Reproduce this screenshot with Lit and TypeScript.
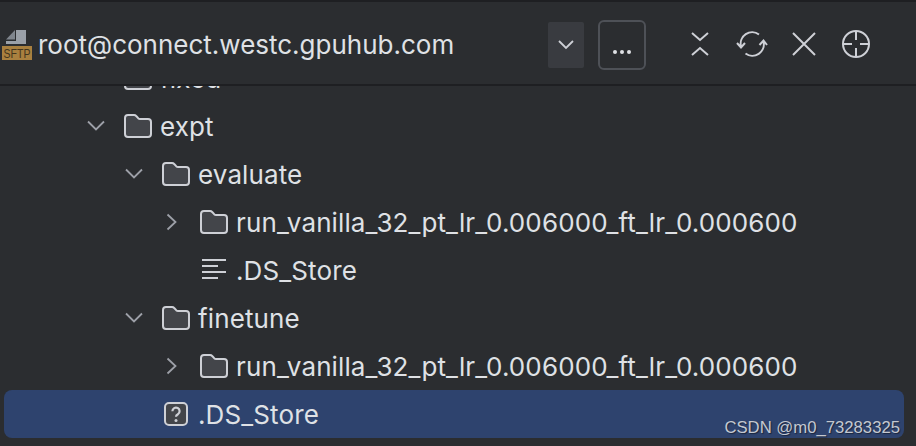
import { LitElement, css, html, svg } from 'lit';
import { customElement } from 'lit/decorators.js';

type Row = {
    depth: number;
    name: string;
    arrow?: 'down' | 'right';
    icon: 'folder' | 'lines' | 'unknown';
    selected?: boolean;
};

const rows: Row[] = [
    { depth: 0, name: 'fixed', icon: 'folder' },
    { depth: 0, name: 'expt', arrow: 'down', icon: 'folder' },
    { depth: 1, name: 'evaluate', arrow: 'down', icon: 'folder' },
    { depth: 2, name: 'run_vanilla_32_pt_lr_0.006000_ft_lr_0.000600', arrow: 'right', icon: 'folder' },
    { depth: 2, name: '.DS_Store', icon: 'lines' },
    { depth: 1, name: 'finetune', arrow: 'down', icon: 'folder' },
    { depth: 2, name: 'run_vanilla_32_pt_lr_0.006000_ft_lr_0.000600', arrow: 'right', icon: 'folder' },
    { depth: 1, name: '.DS_Store', icon: 'unknown', selected: true },
];

const folderIcon = html`<svg width="28" height="24" viewBox="0 0 28 24" fill="none">
    <path d="M1 4a3 3 0 0 1 3-3h6c1 0 1.6.3 2.2 1l2 2.2c.5.5 1 .8 1.8.8h8a3 3 0 0 1 3 3V20a3 3 0 0 1-3 3H4a3 3 0 0 1-3-3z"
        fill="#43454a" stroke="#ced0d6" stroke-width="2" stroke-linejoin="round" />
</svg>`;

const linesIcon = html`<svg width="26" height="22" viewBox="0 0 26 22" fill="none" stroke="#ced0d6" stroke-width="1.8">
    <path d="M1 1h24M1 7h16M1 13h24M1 19h16" />
</svg>`;

const unknownIcon = html`<svg width="24" height="24" viewBox="0 0 24 24" fill="none">
    <rect x="1" y="1" width="22" height="22" rx="4" fill="#43454a" stroke="#ced0d6" stroke-width="2" />
    <path d="M8.4 9.2a3.6 3.6 0 1 1 5.6 3c-1.3.8-2 1.2-2 2.6" stroke="#ced0d6" stroke-width="2.2" />
    <circle cx="12" cy="18.4" r="1.5" fill="#ced0d6" />
</svg>`;

const chevronDown = svg`<path d="M1 4.5l8 8 8-8" />`;
const chevronRight = svg`<path d="M4.5 1.5l8 7.5-8 7.5" />`;

@customElement('app-root')
export class AppRoot extends LitElement
{
    static styles = css`
:host {
    display: block;
    width: 916px;
    height: 446px;
    position: relative;
    overflow: hidden;
    background: #2b2d30;
    font-family: Inter, "Noto Sans", sans-serif;
    color: #dfe1e5;
}

.header {
    position: relative;
    z-index: 1;
    height: 78px;
    box-sizing: content-box;
    border-top: 2px solid #1e1f22;
    border-bottom: 2px solid #1e1f22;
    background: #2b2d30;
    display: flex;
    align-items: center;
    padding: 4px 0 0 2px;
}

.server {
    width: 30px;
    height: 32px;
    flex: none;
}

.title {
    margin: 0 0 2px 6px;
    width: 510px;
    font-size: 26px;
    white-space: nowrap;
}

.combo {
    width: 36px;
    height: 46px;
    background: #393b40;
    border-radius: 2px;
    display: flex;
    align-items: center;
    justify-content: center;
    flex: none;
}

.more {
    margin-left: 14px;
    width: 48px;
    height: 50px;
    box-sizing: border-box;
    border: 2px solid #4e5157;
    border-radius: 6px;
    display: flex;
    align-items: center;
    justify-content: center;
    gap: 3px;
    padding-top: 14px;
    flex: none;
}

.more i {
    width: 4px;
    height: 4px;
    border-radius: 50%;
    background: #dfe1e5;
}

.tools {
    display: flex;
    align-items: center;
    gap: 20px;
    margin: 0 0 2px 38px;
}

.tools svg {
    display: block;
    width: 32px;
    height: 32px;
    fill: none;
    stroke: #ced0d6;
    stroke-width: 2;
}

.tree {
    margin-top: -32px;
}

.row {
    height: 48px;
    margin: 0 12px 0 4px;
    padding-left: calc(var(--depth) * 38px + 83px);
    display: flex;
    align-items: center;
    border-radius: 8px;
    font-size: 26px;
    letter-spacing: .12px;
    white-space: nowrap;
}

.row.selected {
    background: #2e436e;
}

.arrow {
    width: 18px;
    height: 18px;
    flex: none;
    fill: none;
    stroke: #9da0a8;
    stroke-width: 1.8;
}

.slot {
    width: 30px;
    height: 28px;
    margin-left: 18px;
    margin-right: 8px;
    display: flex;
    align-items: center;
    justify-content: center;
    flex: none;
}

.name {
    margin-left: -1px;
    padding-top: 1px;
}

.spacer {
    width: 18px;
    flex: none;
}

.mark {
    position: absolute;
    right: 16px;
    bottom: 8px;
    font: 16.7px "Liberation Sans", Arial, sans-serif;
    color: #c4c8d0;
    text-shadow: 1px 1px 1px rgba(0, 0, 0, .45);
}
    `;

    private renderRow(row: Row)
    {
        const icon = row.icon === 'folder' ? folderIcon : row.icon === 'lines' ? linesIcon : unknownIcon;
        return html`
<div class="row ${row.selected ? 'selected' : ''}" style="--depth:${row.depth}">
    ${row.arrow
        ? html`<svg class="arrow" viewBox="0 0 18 18">${row.arrow === 'down' ? chevronDown : chevronRight}</svg>`
        : html`<span class="spacer"></span>`}
    <span class="slot">${icon}</span>
    <span class="name">${row.name}</span>
</div>`;
    }

    protected render(): unknown
    {
        return html`
<div class="header">
    <svg class="server" viewBox="0 0 30 32">
        <path d="M14 1h10v14H4v-3h10z" fill="#9aa0a8" />
        <path d="M4 10.5L13 1v9.5z" fill="#7f858d" />
        <rect y="17" width="30" height="14" fill="#a9803f" />
        <text transform="translate(15 28.5) scale(1 1.3)" text-anchor="middle" font-family="Liberation Sans" font-size="10.5" fill="#43351d">SFTP</text>
    </svg>
    <div class="title">root@connect.westc.gpuhub.com</div>
    <div class="combo">
        <svg width="18" height="12" viewBox="0 0 18 12" fill="none" stroke="#ced0d6" stroke-width="1.8"><path d="M2 2l7 7 7-7" /></svg>
    </div>
    <div class="more"><i></i><i></i><i></i></div>
    <div class="tools">
        <svg viewBox="0 0 32 32"><path d="M8 5l8 7 8-7M8 27l8-7 8 7" /></svg>
        <svg viewBox="0 0 32 32"><path d="M1 15l4 4.5 4-4.5M5 18.5a11.5 11.5 0 0 1 18-12M31 17l-3.5-4.5-4 4.5M27.5 13.5a11.5 11.5 0 0 1-18 12" /></svg>
        <svg viewBox="0 0 32 32"><path d="M5 5l22 22M27 5L5 27" /></svg>
        <svg viewBox="0 0 32 32"><circle cx="16" cy="16" r="13" /><path d="M16 3v9M16 20v9M3 16h9M20 16h9" /></svg>
    </div>
</div>
<div class="tree">
    ${rows.map((r) => this.renderRow(r))}
</div>
<div class="mark">CSDN @m0_73283325</div>`;
    }
}
